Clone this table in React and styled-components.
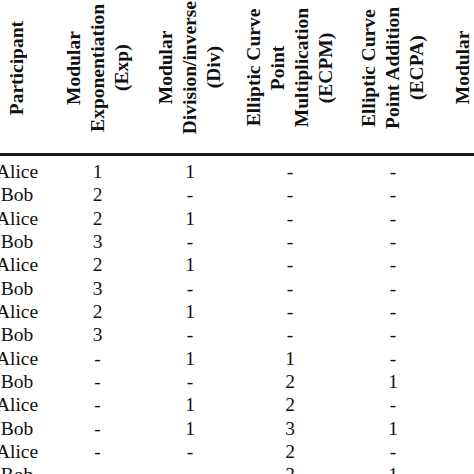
import styled, { createGlobalStyle } from "styled-components";

const GlobalStyle = createGlobalStyle`
  html, body {
    margin: 0;
    padding: 0;
    background: #ffffff;
    overflow: hidden;
  }
  body {
    font-family: "Liberation Serif", "Times New Roman", serif;
    color: #111111;
  }
`;

const Page = styled.div`
  width: 474px;
  height: 474px;
  overflow: hidden;
`;

const Table = styled.table`
  border-collapse: collapse;
  table-layout: fixed;
  width: 549px;
  margin-top: -12px;
  margin-left: -14px;
  font-family: "Liberation Serif", "Times New Roman", serif;
  font-size: 19.5px;
  color: #111111;
`;

const HeadCell = styled.th`
  width: ${props => props.$w}px;
  height: 165px;
  padding: 0;
  border-bottom: 3px solid #161616;
  vertical-align: middle;
  text-align: center;
  font-family: "Liberation Serif", "Times New Roman", serif;
  font-size: 19.5px;
  font-weight: 700;
`;

const Rotated = styled.div`
  display: inline-block;
  writing-mode: vertical-rl;
  transform: rotate(180deg);
  white-space: nowrap;
  line-height: 24px;
  text-align: center;
`;

const Row = styled.tr`
  &:first-child td {
    padding-top: 4px;
  }
`;

const Cell = styled.td`
  padding: 0;
  font-family: "Liberation Serif", "Times New Roman", serif;
  font-size: 19.5px;
  line-height: 23.35px;
  text-align: center;
  white-space: nowrap;
`;

const columns = [
  { w: 62, lines: ["Participant"] },
  { w: 99, lines: ["Modular", "Exponentiation", "(Exp)"] },
  { w: 86, lines: ["Modular", "Division/inverse", "(Div)"] },
  { w: 114, lines: ["Elliptic Curve", "Point", "Multiplication", "(ECPM)"] },
  { w: 92, lines: ["Elliptic Curve", "Point Addition", "(ECPA)"] },
  { w: 96, lines: ["Modular", "Multiplication", "(Mul)"] },
];

const rows = [
  ["Alice", "1", "1", "-", "-", "-"],
  ["Bob", "2", "-", "-", "-", "-"],
  ["Alice", "2", "1", "-", "-", "-"],
  ["Bob", "3", "-", "-", "-", "-"],
  ["Alice", "2", "1", "-", "-", "-"],
  ["Bob", "3", "-", "-", "-", "-"],
  ["Alice", "2", "1", "-", "-", "-"],
  ["Bob", "3", "-", "-", "-", "-"],
  ["Alice", "-", "1", "1", "-", "-"],
  ["Bob", "-", "-", "2", "1", "-"],
  ["Alice", "-", "1", "2", "-", "-"],
  ["Bob", "-", "1", "3", "1", "-"],
  ["Alice", "-", "-", "2", "-", "-"],
  ["Bob", "-", "-", "3", "1", "-"],
];

const App = () => {
  return (
    <Page>
      <GlobalStyle />
      <Table>
        <colgroup>
          {columns.map((col, i) => (
            <col key={i} style={{ width: col.w }} />
          ))}
        </colgroup>
        <thead>
          <tr>
            {columns.map((col, i) => (
              <HeadCell key={i} $w={col.w}>
                <Rotated>
                  {col.lines.map((line, j) => (
                    <span key={j}>
                      {line}
                      {j < col.lines.length - 1 && <br />}
                    </span>
                  ))}
                </Rotated>
              </HeadCell>
            ))}
          </tr>
        </thead>
        <tbody>
          {rows.map((row, i) => (
            <Row key={i}>
              {row.map((val, j) => (
                <Cell key={j}>{val}</Cell>
              ))}
            </Row>
          ))}
        </tbody>
      </Table>
    </Page>
  );
};

export default App;
